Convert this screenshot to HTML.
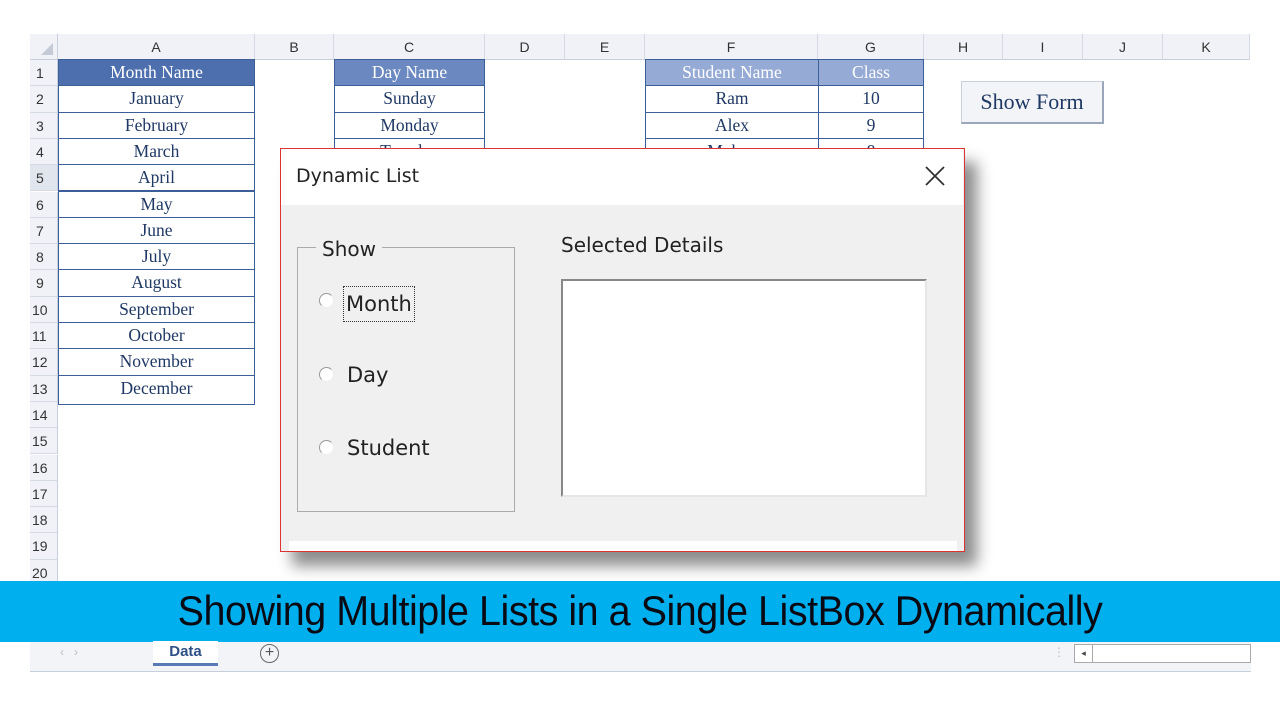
<!DOCTYPE html>
<html><head><meta charset="utf-8"><style>
*{margin:0;padding:0;box-sizing:border-box}
body{width:1280px;height:720px;background:#fff;position:relative;overflow:hidden;font-family:"Liberation Sans",sans-serif}
.a{position:absolute}
.ch{position:absolute;top:34px;height:26px;background:#f0f2f7;border-right:1px solid #d4d9e3;border-bottom:1px solid #c8cfdc;font-size:14px;color:#333;text-align:center;line-height:26px}
.rh{position:absolute;left:30px;width:28px;height:26.3px;background:#f0f2f7;border-bottom:1px solid #d4d9e3;border-right:1px solid #c8cfdc;font-size:14px;color:#333;padding-left:6px;line-height:26px}
.c{position:absolute;height:27.3px;border:1.5px solid #3c5f9a;font-family:"Liberation Serif",serif;font-size:17.5px;color:#1f3864;text-align:center;line-height:24px;background:#fff}
.h{color:#fff}
.dl{font-family:"DejaVu Sans",sans-serif;color:#222}
</style></head><body>
<div class="a" style="left:30px;top:34px;width:28px;height:26px;background:#f0f2f7;border-right:1px solid #c8cfdc;border-bottom:1px solid #c8cfdc"><div style="position:absolute;right:4px;bottom:4px;width:0;height:0;border-left:12px solid transparent;border-bottom:12px solid #c4cad6"></div></div>
<div class="ch" style="left:58px;width:197px">A</div>
<div class="ch" style="left:255px;width:79px">B</div>
<div class="ch" style="left:334px;width:151px">C</div>
<div class="ch" style="left:485px;width:80px">D</div>
<div class="ch" style="left:565px;width:80px">E</div>
<div class="ch" style="left:645px;width:173px">F</div>
<div class="ch" style="left:818px;width:106px">G</div>
<div class="ch" style="left:924px;width:79px">H</div>
<div class="ch" style="left:1003px;width:80px">I</div>
<div class="ch" style="left:1083px;width:80px">J</div>
<div class="ch" style="left:1163px;width:87px">K</div>
<div class="rh" style="top:60px">1</div><div class="rh" style="top:86.3px">2</div><div class="rh" style="top:112.6px">3</div><div class="rh" style="top:138.9px">4</div><div class="rh" style="top:165.2px;background:#e1e5ee">5</div><div class="rh" style="top:191.5px">6</div><div class="rh" style="top:217.8px">7</div><div class="rh" style="top:244.1px">8</div><div class="rh" style="top:270.4px">9</div><div class="rh" style="top:296.7px;padding-left:2px">10</div><div class="rh" style="top:323px;padding-left:2px">11</div><div class="rh" style="top:349.3px;padding-left:2px">12</div><div class="rh" style="top:375.6px;padding-left:2px">13</div><div class="rh" style="top:401.9px;padding-left:2px">14</div><div class="rh" style="top:428.2px;padding-left:2px">15</div><div class="rh" style="top:454.5px;padding-left:2px">16</div><div class="rh" style="top:480.8px;padding-left:2px">17</div><div class="rh" style="top:507.1px;padding-left:2px">18</div><div class="rh" style="top:533.4px;padding-left:2px">19</div><div class="rh" style="top:559.7px;padding-left:2px">20</div>

<div class="c h" style="left:58px;top:59px;width:197px;background:#4e6fae">Month Name</div>
<div class="c" style="left:58px;top:85.3px;width:197px">January</div>
<div class="c" style="left:58px;top:111.6px;width:197px">February</div>
<div class="c" style="left:58px;top:137.9px;width:197px">March</div>
<div class="c" style="left:58px;top:164.2px;width:197px">April</div>
<div class="c" style="left:58px;top:190.5px;width:197px">May</div>
<div class="c" style="left:58px;top:216.8px;width:197px">June</div>
<div class="c" style="left:58px;top:243.1px;width:197px">July</div>
<div class="c" style="left:58px;top:269.4px;width:197px">August</div>
<div class="c" style="left:58px;top:295.7px;width:197px">September</div>
<div class="c" style="left:58px;top:322px;width:197px">October</div>
<div class="c" style="left:58px;top:348.3px;width:197px">November</div>
<div class="c" style="left:58px;top:374.6px;width:197px;height:30px">December</div>

<div class="c h" style="left:334px;top:59px;width:151px;background:#6b89c0">Day Name</div>
<div class="c" style="left:334px;top:85.3px;width:151px">Sunday</div>
<div class="c" style="left:334px;top:111.6px;width:151px">Monday</div>
<div class="c" style="left:334px;top:137.9px;width:151px">Tuesday</div>

<div class="c h" style="left:645px;top:59px;width:174px;background:#95aad4">Student Name</div>
<div class="c h" style="left:818px;top:59px;width:106px;background:#95aad4">Class</div>
<div class="c" style="left:645px;top:85.3px;width:174px">Ram</div>
<div class="c" style="left:818px;top:85.3px;width:106px">10</div>
<div class="c" style="left:645px;top:111.6px;width:174px">Alex</div>
<div class="c" style="left:818px;top:111.6px;width:106px">9</div>
<div class="c" style="left:645px;top:137.9px;width:174px">Mohan</div>
<div class="c" style="left:818px;top:137.9px;width:106px">8</div>

<div class="a" style="left:961px;top:81px;width:143px;height:43px;background:#f2f4f8;border:1px solid #c9d0dc;border-right:2px solid #9aa6bb;border-bottom:2px solid #9aa6bb;font-family:'Liberation Serif',serif;font-size:22px;color:#1f3864;text-align:center;line-height:40px">Show Form</div>

<div class="a" style="left:280px;top:148px;width:685px;height:404px;border:1.5px solid #d33;background:#f0f0f0;box-shadow:12px 14px 14px rgba(0,0,0,.45)">
 <div class="a" style="left:0;top:0;width:682px;height:56px;background:#fff"></div>
 <div class="a dl" style="left:15px;top:16px;font-size:19px">Dynamic List</div>
 <svg class="a" style="left:643px;top:16px" width="22" height="22"><path d="M2 2L20 20M20 2L2 20" stroke="#333" stroke-width="1.8"/></svg>
 <div class="a" style="left:16px;top:98px;width:218px;height:265px;border:1px solid #aaa"></div>
 <div class="a dl" style="left:35px;top:88px;background:#f0f0f0;padding:0 6px;font-size:20px">Show</div>
 <div class="a" style="left:38px;top:144px;width:15px;height:15px;border-radius:50%;border:1.5px solid #999;border-right-color:#eee;border-bottom-color:#eee;background:#fff"></div>
 <div class="a dl" style="left:62px;top:137px;border:1px dotted #333;padding:0 2px;font-size:21px;line-height:34px">Month</div>
 <div class="a" style="left:38px;top:218px;width:15px;height:15px;border-radius:50%;border:1.5px solid #999;border-right-color:#eee;border-bottom-color:#eee;background:#fff"></div>
 <div class="a dl" style="left:66px;top:214px;font-size:21px">Day</div>
 <div class="a" style="left:38px;top:291px;width:15px;height:15px;border-radius:50%;border:1.5px solid #999;border-right-color:#eee;border-bottom-color:#eee;background:#fff"></div>
 <div class="a dl" style="left:66px;top:287px;font-size:21px">Student</div>
 <div class="a dl" style="left:280px;top:84px;font-size:20px">Selected Details</div>
 <div class="a" style="left:280px;top:130px;width:366px;height:218px;background:#fff;border:2px solid #888;border-right-color:#e6e6e6;border-bottom-color:#e6e6e6"></div>
 <div class="a" style="left:8px;top:392px;width:668px;height:10px;background:#fff"></div>
</div>

<div class="a" style="left:0;top:581px;width:1280px;height:61px;background:#00b0ee"></div>
<div class="a" style="left:140px;top:581px;width:1000px;height:61px;text-align:center;font-family:'Liberation Sans',sans-serif;font-size:42px;line-height:60px;color:#0a0a14;letter-spacing:-0.5px;transform:scaleX(0.94);white-space:nowrap">Showing Multiple Lists in a Single ListBox Dynamically</div>

<div class="a" style="left:30px;top:642px;width:1221px;height:30px;background:#f2f4f8;border-bottom:1px solid #c8cfdc"></div>
<div class="a" style="left:60px;top:645px;color:#bbb;font-size:12px">‹ &nbsp; ›</div>
<div class="a" style="left:153px;top:641px;width:65px;height:25px;background:#fff;border-bottom:3px solid #5a7ab5;text-align:center;font-weight:bold;font-size:15px;color:#2f4f87;line-height:22px">Data</div>
<div class="a" style="left:260px;top:644px;width:19px;height:19px;border:1px solid #666;border-radius:50%;text-align:center;line-height:16px;font-size:16px;color:#555">+</div>
<div class="a" style="left:1053px;top:645px;color:#bbb;font-size:12px">⋮</div>
<div class="a" style="left:1074px;top:644px;width:177px;height:19px;background:#fff;border:1px solid #aaa"><div style="width:18px;height:17px;border-right:1px solid #aaa;font-size:9px;text-align:center;line-height:17px;color:#444">◂</div></div>
</body></html>
